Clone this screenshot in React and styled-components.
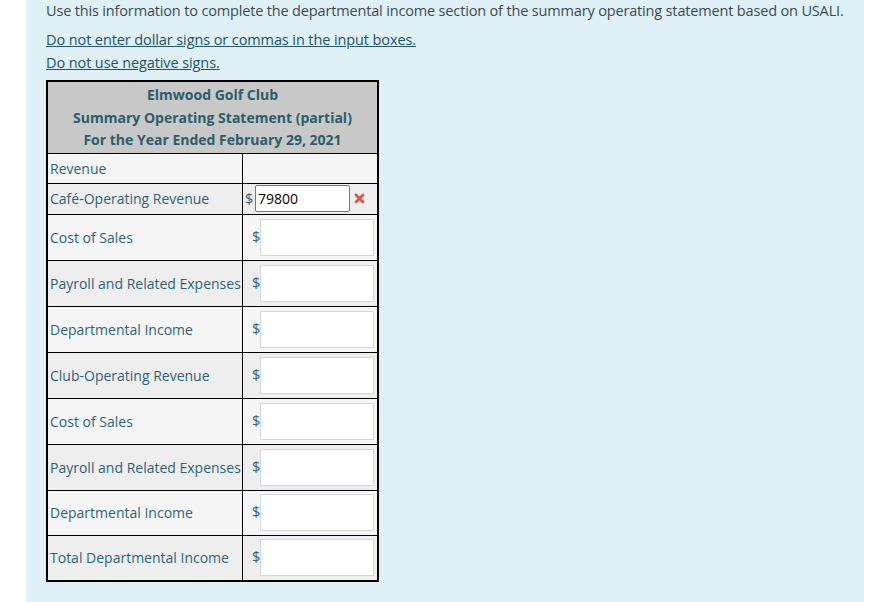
import React from "react";
import styled, { createGlobalStyle } from "styled-components";

const GlobalStyle = createGlobalStyle`
  body {
    margin: 0;
    background: #ffffff;
    font-family: "Open Sans", "Noto Sans", sans-serif;
  }
`;

const Panel = styled.div`
  margin-left: 26px;
  width: 838px;
  min-height: 602px;
  background: #dff0f7;
  padding: 0 0 0 20px;
  box-sizing: border-box;
  color: #3b4b55;
`;

const Intro = styled.p`
  margin: 0;
  padding-top: 1px;
  font-size: 14.5px;
  line-height: 20px;
  letter-spacing: -0.16px;
`;

const Note = styled.p`
  margin: ${({ first }) => (first ? "9px 0 0" : "3px 0 0")};
  font-size: 14.5px;
  line-height: 20px;
  letter-spacing: -0.1px;
  color: #245466;
  text-decoration: underline;
`;

const Sheet = styled.table`
  margin-top: 7px;
  width: 333px;
  border-collapse: collapse;
  border: 2px solid #000;
  font-size: 14px;
  color: #2e6479;
`;

const HeadCell = styled.th`
  background: #c8c8c8;
  border: 1px solid #000;
  padding: 2px 0 1px;
  font-weight: 700;
  line-height: 22.5px;
  color: #2b5d6c;
  text-align: center;
`;

const Row = styled.tr`
  background: ${({ shade }) => (shade ? "#eeeeee" : "#f5f5f5")};
  height: ${({ h }) => h}px;
`;

const Label = styled.td`
  border: 1px solid #000;
  padding: 0 0 0 2px;
  width: 192px;
  white-space: nowrap;
`;

const Amount = styled.td`
  border: 1px solid #000;
  padding: 0 0 0 ${({ tight }) => (tight ? 2 : 9)}px;
  white-space: nowrap;
`;

const AmountWrap = styled.div`
  display: flex;
  align-items: center;
`;

const Dollar = styled.span`
  color: #2e6479;
  width: ${({ tight }) => (tight ? 10 : 8)}px;
  margin-top: ${({ tight }) => (tight ? 0 : -2)}px;
  font-size: 14.5px;
`;

const Field = styled.div`
  background: #fff;
  box-sizing: border-box;
  width: ${({ tight }) => (tight ? 95 : 114)}px;
  height: ${({ tight }) => (tight ? 27 : 37)}px;
  border: 1px solid ${({ tight }) => (tight ? "#767676" : "#d4d8de")};
  border-radius: ${({ tight }) => (tight ? 2 : 0)}px;
  padding: 2px 0 0 2px;
  color: #000;
  font-size: 14px;
  line-height: 21px;
`;

const Wrong = styled.span`
  margin-left: 4px;
  display: inline-flex;
`;

const CrossIcon = () => (
  <svg width="11" height="11" viewBox="0 0 11 11">
    <path d="M2 2 L9 9 M9 2 L2 9" stroke="#e0524f" strokeWidth="2.8" strokeLinecap="round" />
  </svg>
);

const rows = [
  "Cost of Sales",
  "Payroll and Related Expenses",
  "Departmental Income",
  "Club-Operating Revenue",
  "Cost of Sales",
  "Payroll and Related Expenses",
  "Departmental Income",
  "Total Departmental Income",
];

const heights = [46, 46, 46, 46, 46, 46, 45, 46];

export default function App() {
  return (
    <>
      <GlobalStyle />
      <Panel>
        <Intro>
          Use this information to complete the departmental income section of the summary operating statement based on USALI.
        </Intro>
        <Note first>Do not enter dollar signs or commas in the input boxes.</Note>
        <Note>Do not use negative signs.</Note>
        <Sheet>
          <thead>
            <tr>
              <HeadCell colSpan={2}>
                Elmwood Golf Club
                <br />
                Summary Operating Statement (partial)
                <br />
                For the Year Ended February 29, 2021
              </HeadCell>
            </tr>
          </thead>
          <tbody>
            <Row h={30}>
              <Label>Revenue</Label>
              <Amount />
            </Row>
            <Row h={31} shade>
              <Label>Café-Operating Revenue</Label>
              <Amount tight>
                <AmountWrap>
                  <Dollar tight>$</Dollar>
                  <Field tight>79800</Field>
                  <Wrong>
                    <CrossIcon />
                  </Wrong>
                </AmountWrap>
              </Amount>
            </Row>
            {rows.map((label, i) => (
              <Row key={i} h={heights[i]} shade={i % 2 === 1}>
                <Label>{label}</Label>
                <Amount>
                  <AmountWrap>
                    <Dollar>$</Dollar>
                    <Field />
                  </AmountWrap>
                </Amount>
              </Row>
            ))}
          </tbody>
        </Sheet>
      </Panel>
    </>
  );
}
